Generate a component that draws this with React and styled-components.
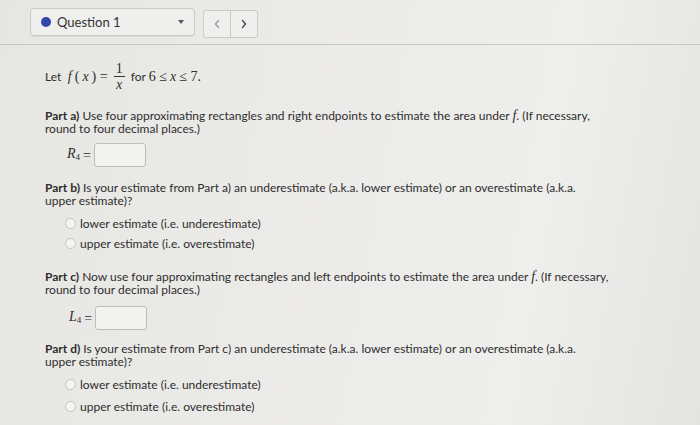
import React from "react";
import styled, { createGlobalStyle } from "styled-components";

const Global = createGlobalStyle`
  html, body { margin: 0; padding: 0; }
  body {
    width: 700px; height: 425px; overflow: hidden;
    background: linear-gradient(100deg, #e6e6e3 0%, #ecebe9 45%, #eeeeec 75%, #e4e4e2 100%);
    font-family: Lato, "Open Sans", sans-serif;
    color: #2e2e2e;
  }
`;

const Header = styled.div`
  display: flex;
  align-items: flex-start;
  gap: 8px;
  padding: 8px 0 0 30px;
  height: 45px;
  box-sizing: border-box;
  border-bottom: 1px solid #c6c6c4;
`;

const Select = styled.div`
  width: 165px;
  height: 28px;
  box-sizing: border-box;
  border: 1px solid #c9c9c7;
  border-radius: 4px;
  background: #efefed;
  display: flex;
  align-items: center;
  padding: 0 10px 0 10px;
  font-size: 13px;
  color: #333;
  box-shadow: 0 1px 1px rgba(0,0,0,0.06);
`;

const Dot = styled.span`
  width: 10px; height: 10px; border-radius: 50%;
  background: #2f47a8;
  margin-right: 6px;
  flex: none;
`;

const Caret = styled.span`
  margin-left: auto;
  width: 0; height: 0;
  border-left: 3px solid transparent;
  border-right: 3px solid transparent;
  border-top: 4px solid #555;
`;

const Nav = styled.div`
  display: flex;
  margin-top: 2px;
  border: 1px solid #cacac8;
  border-radius: 3px;
  background: #efefed;
`;

const NavBtn = styled.div`
  width: 26px; height: 26px;
  display: flex; align-items: center; justify-content: center;
  color: ${p => p.dim ? "#9a9a9a" : "#444"};
  border-left: ${p => p.first ? "none" : "1px solid #cacac8"};
`;

const Content = styled.div`
  padding-left: 45px;
  font-size: 12px;
  line-height: 13px;
  width: 600px;
`;

const Para = styled.p`
  margin: ${p => p.m || "0"};
`;

const Bold = styled.b`
  font-weight: 700;
`;

const MI = styled.span`
  font-family: "Liberation Serif", "DejaVu Serif", serif;
  font-style: italic;
  font-size: 14px;
`;

const MR = styled.span`
  font-family: "Liberation Serif", "DejaVu Serif", serif;
  font-size: 14px;
`;

const LetLine = styled.div`
  display: flex;
  align-items: center;
  height: 34px;
  margin-top: 14px;
  gap: 3px;
`;

const Frac = styled.span`
  display: inline-flex;
  flex-direction: column;
  align-items: center;
  margin: 0 3px;
  font-family: "Liberation Serif", "DejaVu Serif", serif;
  font-size: 14px;
  line-height: 15px;
`;

const Num = styled.span`
  border-bottom: 1px solid #333;
  padding: 0 2px;
`;

const Den = styled.span`
  font-style: italic;
`;

const AnswerRow = styled.div`
  display: flex;
  align-items: center;
  padding-left: ${p => p.pl}px;
  margin: ${p => p.m};
  gap: 3px;
`;

const Box = styled.div`
  width: 52px; height: 24px;
  box-sizing: border-box;
  border: 1.5px solid #bdbdbb;
  border-radius: 3px;
  background: #f2f2f0;
`;

const Options = styled.div`
  display: flex;
  flex-direction: column;
  gap: ${p => p.gap}px;
  padding-left: 20px;
  margin: ${p => p.m};
`;

const Opt = styled.label`
  display: flex;
  align-items: center;
  gap: 4px;
  height: 13px;
`;

const Radio = styled.span`
  width: 9px; height: 9px; border-radius: 50%;
  border: 1px solid #c4c4c2;
  background: #f4f4f2;
  flex: none;
`;

const Sub = styled.sub`
  font-size: 9px;
  font-style: normal;
  vertical-align: -2px;
`;

const Chevron = ({ dir }) => (
  <svg width="8" height="10" viewBox="0 0 8 10" fill="none" stroke="currentColor" strokeWidth="1.3" strokeLinecap="round" strokeLinejoin="round">
    {dir === "left" ? <path d="M5.5 1.5 L2.5 5 L5.5 8.5" /> : <path d="M2.5 1.5 L5.5 5 L2.5 8.5" />}
  </svg>
);

export default function App() {
  return (
    <>
      <Global />
      <Header>
        <Select>
          <Dot />
          Question 1
          <Caret />
        </Select>
        <Nav>
          <NavBtn first dim><Chevron dir="left" /></NavBtn>
          <NavBtn><Chevron dir="right" /></NavBtn>
        </Nav>
      </Header>
      <Content>
        <LetLine>
          Let <MI>&nbsp;f</MI><MR>(</MR><MI>x</MI><MR>) =</MR>
          <Frac><Num>1</Num><Den>x</Den></Frac>
          for <MR>6 ≤ </MR><MI>x</MI><MR> ≤ 7.</MR>
        </LetLine>
        <Para m="16px 0 0 0">
          <Bold>Part a)</Bold> Use four approximating rectangles and right endpoints to estimate the area under <MI>f</MI>. (If necessary,
          <br />round to four decimal places.)
        </Para>
        <AnswerRow pl={22} m="8px 0 0 0">
          <MI>R<Sub>4</Sub></MI><MR> =</MR><Box />
        </AnswerRow>
        <Para m="14px 0 0 0">
          <Bold>Part b)</Bold> Is your estimate from Part a) an underestimate (a.k.a. lower estimate) or an overestimate (a.k.a.
          <br />upper estimate)?
        </Para>
        <Options gap={7} m="10px 0 0 0">
          <Opt><Radio />lower estimate (i.e. underestimate)</Opt>
          <Opt><Radio />upper estimate (i.e. overestimate)</Opt>
        </Options>
        <Para m="20px 0 0 0">
          <Bold>Part c)</Bold> Now use four approximating rectangles and left endpoints to estimate the area under <MI>f</MI>. (If necessary,
          <br />round to four decimal places.)
        </Para>
        <AnswerRow pl={24} m="10px 0 0 0">
          <MI>L<Sub>4</Sub></MI><MR> =</MR><Box />
        </AnswerRow>
        <Para m="12px 0 0 0">
          <Bold>Part d)</Bold> Is your estimate from Part c) an underestimate (a.k.a. lower estimate) or an overestimate (a.k.a.
          <br />upper estimate)?
        </Para>
        <Options gap={9} m="10px 0 0 0">
          <Opt><Radio />lower estimate (i.e. underestimate)</Opt>
          <Opt><Radio />upper estimate (i.e. overestimate)</Opt>
        </Options>
      </Content>
    </>
  );
}
